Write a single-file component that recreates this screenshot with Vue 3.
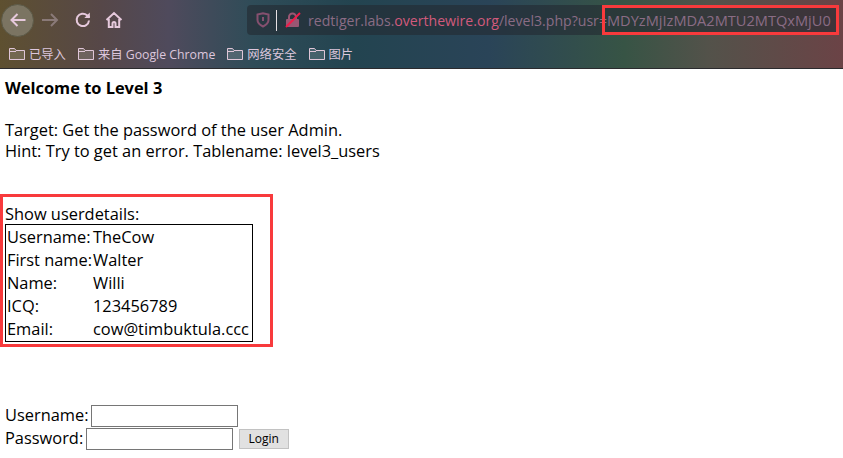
<template>
  <div class="page">
    <header class="chrome">
      <div class="toolbar">
        <button class="nav back" aria-label="Back">
          <svg width="18" height="18" viewBox="0 0 18 18" fill="none" stroke="#e6c9dc" stroke-width="2"><path d="M16.500 9H2.500M8.500 3 2.500 9l6 6" /></svg>
        </button>
        <svg class="fwd" width="18" height="18" viewBox="0 0 18 18" fill="none" stroke="#8a7a78" stroke-width="2"><path d="M1 9h15M10 3l6 6-6 6" /></svg>
        <svg class="reload" width="18" height="18" viewBox="0 0 18 18" fill="none" stroke="#e6c9dc" stroke-width="2"><path d="M15 9.500A6.200 6.200 0 1 1 13 4.300L15.500 6.500" /><path d="M15.800 1.500v5.500h-5.500" fill="#e6c9dc" stroke="none" /></svg>
        <svg class="home" width="18" height="18" viewBox="0 0 18 18" fill="none" stroke="#e6c9dc" stroke-width="2"><path d="M1.500 9 9 2l7.500 7M3.800 8v8h3.700v-3.500a1.500 1.500 0 0 1 3 0V16h3.700V8" /></svg>
        <div class="omnibox">
          <svg class="shield" width="14" height="16" viewBox="0 0 14 16" fill="none" stroke="#85506f" stroke-width="2"><path d="M1.500 2.500 7 1.200l5.500 1.300V8c0 3-2.500 5-5.500 6.500C4 13 1.500 11 1.500 8z" /><path d="M7 5v4" /></svg>
          <span class="sep"></span>
          <svg class="lock" width="16" height="16" viewBox="0 0 16 16"><rect x="1" y="7" width="13" height="8" rx="1" fill="#9a5673" /><path d="M4 7V5a3.500 3.500 0 0 1 7 0v2" fill="none" stroke="#9a5673" stroke-width="2" /><path d="M1 15 15 1" stroke="#ee1c4a" stroke-width="2" /></svg>
          <span class="url"><span class="dim">redtiger.labs.</span><span class="domain">overthewire.org</span><span class="dim">/level3.php?usr=</span><span class="dim token">MDYzMjIzMDA2MTU2MTQxMjU0</span></span>
        </div>
      </div>
      <nav class="bookmarks">
        <span v-for="b in bookmarks" :key="b" class="bookmark">
          <svg width="16" height="14" viewBox="0 0 16 14" fill="rgba(255,255,255,.14)" stroke="#e0c6d8" stroke-width="1"><path d="M.5 12.500v-11h5l1.500 2h8.500v9z" /><path d="M.5 4.500h6.500" /></svg>
          <span>{{ b }}</span>
        </span>
      </nav>
    </header>

    <main class="content">
      <b class="welcome">Welcome to Level 3</b>
      <p class="intro">Target: Get the password of the user Admin.<br>Hint: Try to get an error. Tablename: level3_users</p>
      <div class="details">
        <div class="details-title">Show userdetails:</div>
        <table>
          <colgroup><col class="label-col"><col></colgroup>
          <tbody>
            <tr v-for="r in rows" :key="r[0]"><td>{{ r[0] }}</td><td>{{ r[1] }}</td></tr>
          </tbody>
        </table>
        <span class="mark mark-details"></span>
      </div>
      <form class="login" @submit.prevent>
        <div>Username: <input class="user" type="text" aria-label="Username"></div>
        <div>Password: <input class="pass" type="password" aria-label="Password"> <button class="submit">Login</button></div>
      </form>
    </main>
    <span class="mark mark-url"></span>
  </div>
</template>

<script setup>
const bookmarks = ['已导入', '来自 Google Chrome', '网络安全', '图片']
const rows = [
  ['Username:', 'TheCow'],
  ['First name:', 'Walter'],
  ['Name:', 'Willi'],
  ['ICQ:', '123456789'],
  ['Email:', 'cow@timbuktula.ccc']
]
</script>

<style>
html, body { margin: 0; background: #fff; overflow: hidden; }
</style>

<style scoped>
.page {
  position: relative;
  width: 843px;
  height: 458px;
  overflow: hidden;
  font-family: "Open Sans", "Noto Sans CJK SC", sans-serif;
  color: #000;
}
.chrome {
  height: 68px;
  border-bottom: 1px solid #2b2b2e;
  display: flex;
  flex-direction: column;
  background: linear-gradient(90deg, #5e5030 0%, #564748 12%, #4f4a5c 20%, #2f4c58 30%, #234450 42%, #2a4458 58%, #375445 74%, #53524a 84%, #6b4346 100%);
}
.toolbar {
  height: 40px;
  display: flex;
  align-items: center;
}
.nav {
  width: 33px;
  height: 33px;
  margin-left: 1px;
  padding: 0;
  border: 1px solid #5c5a48;
  border-radius: 50%;
  background: #7b7462;
  display: flex;
  align-items: center;
  justify-content: center;
}
.fwd { margin-left: 7px; }
.reload { margin-left: 15px; }
.home { margin-left: 13px; }
.omnibox {
  margin-left: 124px;
  width: 592px;
  height: 30px;
  background: rgba(36, 42, 50, 0.62);
  border-radius: 4px;
  display: flex;
  align-items: center;
  box-sizing: border-box;
  padding-left: 9px;
}
.sep { width: 1px; height: 21px; background: #e6e0e4; margin: 0 8px 0 6px; }
.lock { margin-right: 7px; }
.url {
  font-size: 14.100px;
  white-space: nowrap;
}
.token { font-size: 14.600px; }
.dim { color: #8a6c85; }
.domain { color: #d25a7c; }
.bookmarks {
  height: 28px;
  display: flex;
  align-items: center;
  gap: 12px;
  padding-left: 9px;
  font-size: 12.300px;
  color: #ddc7dd;
}
.bookmark { display: flex; align-items: center; gap: 4px; white-space: nowrap; }
.content {
  position: relative;
  font-size: 16.400px;
  line-height: 21px;
  padding: 8px 5px 0;
}
.welcome { display: block; font-weight: 700; }
.intro { margin: 21px 0 0; }
.details { margin-top: 42px; position: relative; }
.details-title { height: 21px; }
table {
  border: 1px solid #000;
  border-collapse: separate;
  border-spacing: 1px;
  table-layout: fixed;
  width: 248px;
}
.label-col { width: 85px; }
td { padding: 0; line-height: 22px; white-space: nowrap; }
.login { margin-top: 62px; }
.login div { height: 23px; }
input {
  width: 147px;
  height: 22px;
  box-sizing: border-box;
  border: 1px solid #767676;
  padding: 0;
  vertical-align: middle;
  margin-bottom: 2px;
}
.user { margin-left: -2px; }
.pass { margin-left: -1px; }
.submit {
  width: 50px;
  height: 20px;
  padding: 0;
  margin: 0 0 2px 1px;
  border: 1px solid #c2c2c2;
  background: #e1e1e1;
  font-family: inherit;
  font-size: 12px;
  vertical-align: middle;
}
.mark { position: absolute; border: 3px solid #f83a3c; box-sizing: border-box; }
.mark-details { left: -5px; top: -9px; width: 273px; height: 153px; }
.mark-url { left: 602px; top: 5px; width: 237px; height: 30px; }
</style>
